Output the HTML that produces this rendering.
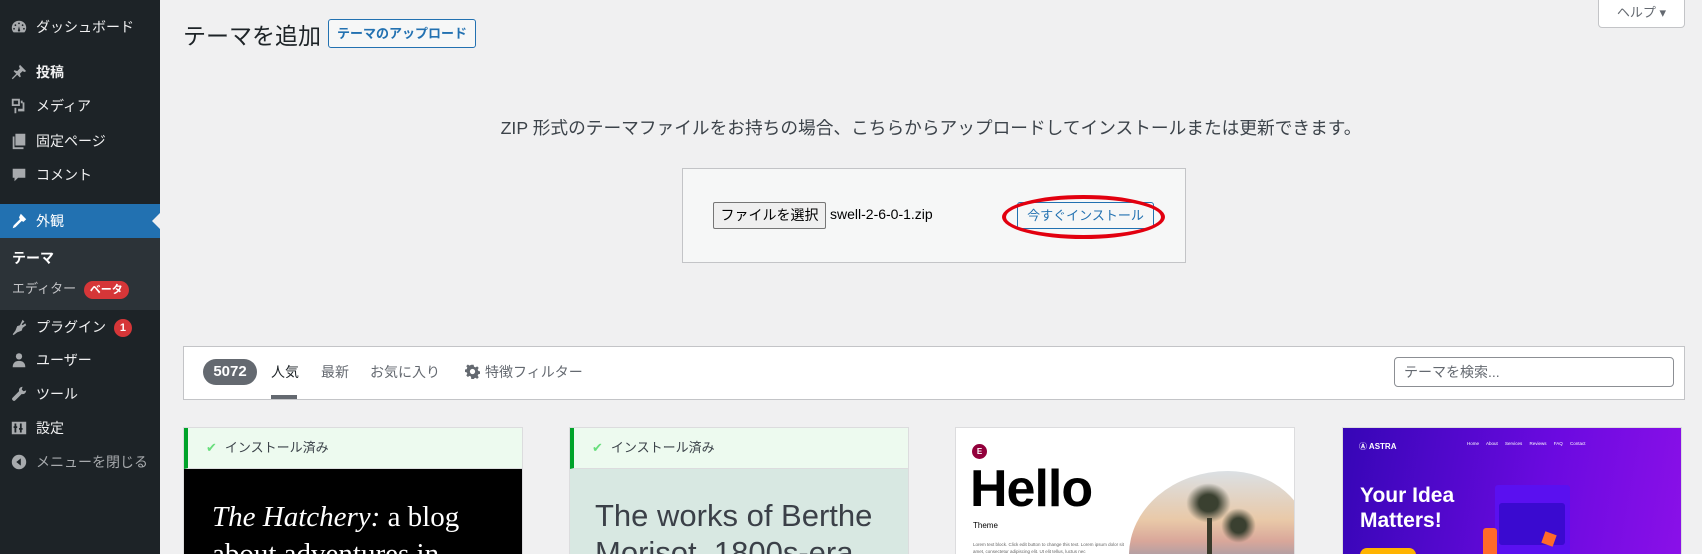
<!DOCTYPE html>
<html><head><meta charset="utf-8"><style>
*{box-sizing:border-box;margin:0;padding:0}
body{width:1702px;height:554px;overflow:hidden;background:#f0f0f1;font-family:"Liberation Sans","Noto Sans CJK JP",sans-serif;position:relative;color:#3c434a}
.abs{position:absolute}
#side{left:0;top:0;width:160px;height:554px;background:#1d2327}
.mi{position:absolute;left:0;width:160px;height:34px;color:#f0f0f1;font-size:14px;line-height:34px;padding-left:36px}
.ic{position:absolute;left:10px;top:8px;width:18px;height:18px;fill:#a7aaad}
.badge{display:inline-block;background:#d63638;color:#fff;border-radius:9px;font-size:11px;line-height:18px;height:18px;padding:0 6px;vertical-align:middle;margin-left:4px;font-weight:bold}
.card{position:absolute;top:427px;width:340px;height:127px;border:1px solid #dcdcde;border-bottom:0;overflow:hidden}
.inst{height:41px;background:#edfaef;border-left:4px solid #00a32a;border-bottom:1px solid #dcdcde;font-size:13px;line-height:40px;padding-left:18px;color:#3c434a}
.inst b{color:#68de7c;font-weight:normal;margin-right:8px}
</style></head><body>
<div id="side" class="abs">
 <div class="mi" style="top:10px">ダッシュボード<svg class="ic" viewBox="0 0 20 20"><path d="M10 3a8 8 0 0 0-8 8c0 2 .8 3.8 2 5h12a8 8 0 0 0 2-5 8 8 0 0 0-8-8zm0 2a1 1 0 1 1 0 2 1 1 0 0 1 0-2zm-4 2a1 1 0 1 1 0 2 1 1 0 0 1 0-2zm8 0a1 1 0 1 1 0 2 1 1 0 0 1 0-2zm-9.5 4a1 1 0 1 1 0 2 1 1 0 0 1 0-2zm11 0a1 1 0 1 1 0 2 1 1 0 0 1 0-2zM10 9l1 4a1.3 1.3 0 1 1-2 0z"/></svg></div>
 <div class="mi" style="top:55px;font-weight:bold">投稿<svg class="ic" viewBox="0 0 20 20"><path d="M11 2l7 7-2 1-2-1-3 3 1 3-1 1-3-3-5 5-1-1 5-5-3-3 1-1 3 1 3-3-1-2z"/></svg></div>
 <div class="mi" style="top:89px">メディア<svg class="ic" viewBox="0 0 20 20"><path d="M2 2h9v8H2zm2 2v4h5V4zm8 0h2v2h2v10h-7v-3h5V7h-2zM5 12h2v6H5z"/></svg></div>
 <div class="mi" style="top:124px">固定ページ<svg class="ic" viewBox="0 0 20 20"><path d="M6 2h11v13H6zM3 5h2v12h10v2H3z"/></svg></div>
 <div class="mi" style="top:158px">コメント<svg class="ic" viewBox="0 0 20 20"><path d="M3 3h14v10H9l-4 4v-4H3z"/></svg></div>
 <div class="abs" style="top:204px;left:0;width:160px;height:34px;background:#2271b1"></div>
 <div class="mi" style="top:204px;color:#fff">外観<svg class="ic" style="fill:#fff" viewBox="0 0 20 20"><path d="M12 2l6 6-3 3-2-1-7 7-3 1 1-3 7-7-1-2zm-9 14l1 1"/></svg></div>
 <div class="abs" style="left:152px;top:213px;width:0;height:0;border:8px solid transparent;border-right-color:#f0f0f1;border-left:0"></div>
 <div class="abs" style="top:238px;left:0;width:160px;height:72px;background:#2c3338"></div>
 <div class="abs" style="top:248px;left:12px;color:#fff;font-weight:bold;font-size:14px">テーマ</div>
 <div class="abs" style="top:278px;left:12px;color:#c3c4c7;font-size:13px">エディター <span class="badge" style="font-weight:bold">ベータ</span></div>
 <div class="mi" style="top:310px">プラグイン <span class="badge">1</span><svg class="ic" viewBox="0 0 20 20"><path d="M14 2l2 2-3 3 1 1 3-2 1 2-4 3-1 3-5 2-4 3-1-1 3-4 2-5 3-1z"/></svg></div>
 <div class="mi" style="top:343px">ユーザー<svg class="ic" viewBox="0 0 20 20"><circle cx="10" cy="6" r="3.5"/><path d="M3 18c0-5 3-7 7-7s7 2 7 7z"/></svg></div>
 <div class="mi" style="top:377px">ツール<svg class="ic" viewBox="0 0 20 20"><path d="M14 2a4 4 0 0 0-4 5L3 14a2 2 0 0 0 3 3l7-7a4 4 0 0 0 5-4l-3 1-2-2 1-3z"/></svg></div>
 <div class="mi" style="top:411px">設定<svg class="ic" viewBox="0 0 20 20"><path d="M2 3h16v14H2zm3 2v3H4v2h1v5h2v-5h1V8H7V5zm6 0v5h-1v2h1v3h2v-3h1v-2h-1V5z"/></svg></div>
 <div class="mi" style="top:445px;color:#a7aaad">メニューを閉じる<svg class="ic" viewBox="0 0 20 20"><path d="M10 2a8 8 0 1 0 0 16 8 8 0 0 0 0-16zm2 4v8l-5-4z"/></svg></div>
</div>

<div class="abs" style="left:183px;top:17px;font-size:23px;color:#1d2327">テーマを追加</div>
<div class="abs" style="left:328px;top:19px;width:148px;height:29px;border:1px solid #2271b1;border-radius:3px;background:#f6f7f7;color:#2271b1;font-size:13px;line-height:27px;text-align:center;font-weight:bold">テーマのアップロード</div>
<div class="abs" style="left:1598px;top:-1px;width:87px;height:29px;background:#fff;border:1px solid #c3c4c7;border-radius:0 0 4px 4px;font-size:13px;line-height:26px;text-align:center;color:#646970">ヘルプ ▾</div>

<div class="abs" style="left:160px;width:1542px;top:114px;text-align:center;font-size:17.7px;color:#3c434a">ZIP 形式のテーマファイルをお持ちの場合、こちらからアップロードしてインストールまたは更新できます。</div>
<div class="abs" style="left:682px;top:168px;width:504px;height:95px;background:#f6f7f7;border:1px solid #c3c4c7"></div>
<div class="abs" style="left:713px;top:202px;width:113px;height:27px;background:#efefef;border:1px solid #767676;border-radius:2px;font-size:14px;line-height:25px;text-align:center;color:#000">ファイルを選択</div>
<div class="abs" style="left:830px;top:206px;font-size:14px;color:#000">swell-2-6-0-1.zip</div>
<div class="abs" style="left:1017px;top:202px;width:137px;height:27px;border:1px solid #2271b1;border-radius:3px;background:#f6f7f7;color:#2271b1;font-size:13px;line-height:25px;text-align:center">今すぐインストール</div>
<div class="abs" style="left:1002px;top:195px;width:163px;height:44px;border:4px solid #e2000f;border-radius:50%"></div>

<div class="abs" style="left:183px;top:346px;width:1502px;height:54px;background:#fff;border:1px solid #c3c4c7"></div>
<div class="abs" style="left:203px;top:359px;width:54px;height:26px;border-radius:13px;background:#646970;color:#fff;font-weight:bold;font-size:15px;line-height:26px;text-align:center">5072</div>
<div class="abs" style="left:271px;top:362px;font-size:14px;color:#1d2327">人気</div>
<div class="abs" style="left:271px;top:395px;width:26px;height:4px;background:#646970"></div>
<div class="abs" style="left:321px;top:362px;font-size:14px;color:#646970">最新</div>
<div class="abs" style="left:370px;top:362px;font-size:14px;color:#646970">お気に入り</div>
<svg class="abs" style="left:465px;top:364px" width="15" height="15" viewBox="0 0 20 20"><path fill="#646970" d="M8.5 1h3l.5 2.5 2 1 2.2-1.4 2.1 2.1-1.4 2.2 1 2 2.6.6v3l-2.6.5-1 2 1.4 2.2-2.1 2.1-2.2-1.4-2 1-.5 2.6h-3L8 16.9l-2-1-2.2 1.4-2.1-2.1L3.1 13l-1-2L-.5 10.5v-3L2.1 7l1-2L1.7 2.8 3.8.7 6 2.1l2-1zM10 6.5a3.5 3.5 0 1 0 0 7 3.5 3.5 0 0 0 0-7z"/></svg>
<div class="abs" style="left:485px;top:362px;font-size:14px;color:#646970">特徴フィルター</div>
<div class="abs" style="left:1394px;top:357px;width:280px;height:30px;border:1px solid #8c8f94;border-radius:4px;background:#fff;font-size:14px;line-height:28px;padding-left:9px;color:#646970">テーマを検索...</div>

<div class="card" style="left:183px;background:#000">
 <div class="inst"><b>✔</b>インストール済み</div>
 <div style="color:#fff;font-family:'Liberation Serif',serif;font-size:29px;line-height:37px;padding:30px 0 0 28px"><i>The Hatchery:</i> a blog<br>about adventures in</div>
</div>
<div class="card" style="left:569px;background:#d8e8e2">
 <div class="inst"><b>✔</b>インストール済み</div>
 <div style="color:#3b4048;font-size:31px;line-height:37px;padding:28px 0 0 25px">The works of Berthe<br>Morisot, 1800s-era</div>
</div>
<div class="card" style="left:955px;background:#fff">
 <div class="abs" style="left:16px;top:16px;width:15px;height:15px;border-radius:50%;background:#92003b;color:#fff;font-size:8px;line-height:15px;text-align:center;font-weight:bold">E</div>
 <div class="abs" style="left:14px;top:31px;font-size:52px;font-weight:bold;color:#000;letter-spacing:-1px">Hello</div>
 <div class="abs" style="left:17px;top:93px;font-size:8px;color:#000">Theme</div>
 <div class="abs" style="left:17px;top:113px;width:160px;font-size:4.5px;color:#666;line-height:7px">Lorem text block. Click edit button to change this text. Lorem ipsum dolor sit amet, consectetur adipiscing elit. Ut elit tellus, luctus nec</div>
 <div class="abs" style="left:173px;top:43px;width:180px;height:140px;border-radius:55% 45% 0 40%/60% 50% 0 40%;background:linear-gradient(180deg,#dbe0e4 0%,#e9c9a8 35%,#d9a79a 50%,#8c98ad 70%,#6d7b93 100%)"></div>
 <div class="abs" style="left:230px;top:55px;width:45px;height:40px;border-radius:50%;background:radial-gradient(#3a4030 30%,transparent 70%)"></div>
 <div class="abs" style="left:265px;top:80px;width:35px;height:35px;border-radius:50%;background:radial-gradient(#3a4030 30%,transparent 70%)"></div>
 <div class="abs" style="left:251px;top:90px;width:5px;height:60px;background:#3a3a2a"></div>
</div>
<div class="card" style="left:1342px;background:linear-gradient(100deg,#3606b6,#6b0ae0 60%,#8a10e8)">
 <div class="abs" style="left:16px;top:13px;color:#fff;font-size:8px;font-weight:bold">Ⓐ ASTRA</div>
 <div class="abs" style="left:124px;top:13px;color:#fff;font-size:4.5px;word-spacing:6px">Home About Services Reviews FAQ Contact</div>
 <div class="abs" style="left:17px;top:55px;color:#fff;font-size:21px;font-weight:bold;line-height:25px">Your Idea<br>Matters!</div>
 <div class="abs" style="left:17px;top:120px;width:56px;height:14px;border-radius:7px;background:#ffb300"></div>
 <div class="abs" style="left:152px;top:57px;width:75px;height:85px;background:#5a10f0;border-radius:3px"></div>
 <div class="abs" style="left:156px;top:75px;width:66px;height:42px;background:#3a0ad0;border-radius:3px"></div>
 <div class="abs" style="left:140px;top:100px;width:14px;height:30px;background:#ff6a2a;border-radius:3px"></div>
 <div class="abs" style="left:200px;top:105px;width:12px;height:12px;background:#ff6a2a;transform:rotate(20deg)"></div>
</div>
</body></html>
